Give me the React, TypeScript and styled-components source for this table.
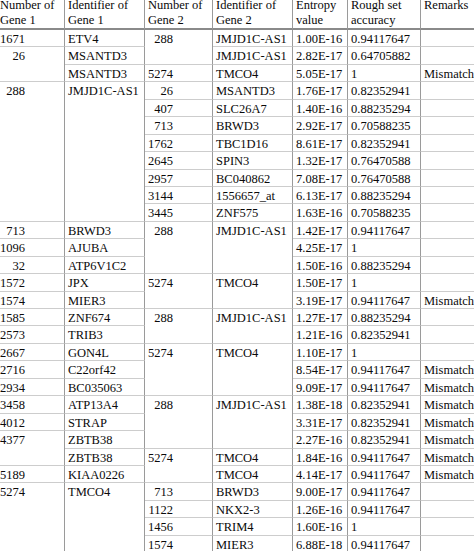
import styled, { createGlobalStyle } from "styled-components";

const GlobalStyle = createGlobalStyle`
  html, body {
    margin: 0;
    padding: 0;
    background: #fff;
    overflow: hidden;
  }
`;

type Cell = { text: string; span?: number; num?: boolean };

const n = (text: string, span = 1): Cell => ({ text, span, num: true });
const t = (text: string, span = 1): Cell => ({ text, span });

const headers = [
  ["Number of", "Gene 1"],
  ["Identifier of", "Gene 1"],
  ["Number of", "Gene 2"],
  ["Identifier of", "Gene 2"],
  ["Entropy", "value"],
  ["Rough set", "accuracy"],
  ["Remarks", ""],
];

// rows as an html table would list them: cells covered by a rowspan are left out
const rows: (Cell | string)[][] = [
  [n("1671"), "ETV4", n("288", 2), "JMJD1C-AS1", "1.00E-16", "0.94117647", ""],
  [n("26", 2), "MSANTD3", "JMJD1C-AS1", "2.82E-17", "0.64705882", ""],
  ["MSANTD3", n("5274"), "TMCO4", "5.05E-17", "1", "Mismatch"],
  [n("288", 8), t("JMJD1C-AS1", 8), n("26"), "MSANTD3", "1.76E-17", "0.82352941", ""],
  [n("407"), "SLC26A7", "1.40E-16", "0.88235294", ""],
  [n("713"), "BRWD3", "2.92E-17", "0.70588235", ""],
  [n("1762"), "TBC1D16", "8.61E-17", "0.82352941", ""],
  [n("2645"), "SPIN3", "1.32E-17", "0.76470588", ""],
  [n("2957"), "BC040862", "7.08E-17", "0.76470588", ""],
  [n("3144"), "1556657_at", "6.13E-17", "0.88235294", ""],
  [n("3445"), "ZNF575", "1.63E-16", "0.70588235", ""],
  [n("713"), "BRWD3", n("288", 3), t("JMJD1C-AS1", 3), "1.42E-17", "0.94117647", ""],
  [n("1096"), "AJUBA", "4.25E-17", "1", ""],
  [n("32"), "ATP6V1C2", "1.50E-16", "0.88235294", ""],
  [n("1572"), "JPX", n("5274", 2), t("TMCO4", 2), "1.50E-17", "1", ""],
  [n("1574"), "MIER3", "3.19E-17", "0.94117647", "Mismatch"],
  [n("1585"), "ZNF674", n("288", 2), t("JMJD1C-AS1", 2), "1.27E-17", "0.88235294", ""],
  [n("2573"), "TRIB3", "1.21E-16", "0.82352941", ""],
  [n("2667"), "GON4L", n("5274", 3), t("TMCO4", 3), "1.10E-17", "1", ""],
  [n("2716"), "C22orf42", "8.54E-17", "0.94117647", "Mismatch"],
  [n("2934"), "BC035063", "9.09E-17", "0.94117647", "Mismatch"],
  [n("3458"), "ATP13A4", n("288", 3), t("JMJD1C-AS1", 3), "1.38E-18", "0.82352941", "Mismatch"],
  [n("4012"), "STRAP", "3.31E-17", "0.82352941", "Mismatch"],
  [n("4377", 2), "ZBTB38", "2.27E-16", "0.82352941", "Mismatch"],
  ["ZBTB38", n("5274", 2), "TMCO4", "1.84E-16", "0.94117647", "Mismatch"],
  [n("5189"), "KIAA0226", "TMCO4", "4.14E-17", "0.94117647", "Mismatch"],
  [n("5274", 4), t("TMCO4", 4), n("713"), "BRWD3", "9.00E-17", "0.94117647", ""],
  [n("1122"), "NKX2-3", "1.26E-16", "0.94117647", ""],
  [n("1456"), "TRIM4", "1.60E-16", "1", ""],
  [n("1574"), "MIER3", "6.88E-18", "0.94117647", ""],
];

const Page = styled.div`
  width: 474px;
  height: 551px;
  overflow: hidden;
  font-family: "Liberation Serif", "Times New Roman", serif;
  font-size: 12.5px;
  color: #0a0a0a;
`;

const Grid = styled.div`
  display: grid;
  grid-template-columns: 68px 80px 68px 80px 55px 73px 70px;
  grid-template-rows: 34px repeat(30, 17.45px);
  margin: -4px 0 0 -3px;
  width: 494px;
`;

const Head = styled.div`
  box-sizing: border-box;
  padding: 2px 3px 0;
  line-height: 15px;
  border-right: 1px solid #9a9a9a;
  border-bottom: 2px solid #8a8a8a;
  white-space: nowrap;
`;

const Td = styled.div<{ $span: number }>`
  grid-row: span ${(p) => p.$span};
  box-sizing: border-box;
  padding: 1px 3px 0;
  line-height: 16px;
  border-right: 1px solid #9a9a9a;
  border-bottom: 1px solid #cdcdcd;
  white-space: nowrap;
`;

const Num = styled.span`
  display: inline-block;
  width: 2em;
  text-align: right;
`;

export default function App() {
  return (
    <Page>
      <GlobalStyle />
      <Grid>
        {headers.map(([a, b], i) => (
          <Head key={"h" + i}>
            {a}
            <br />
            {b}
          </Head>
        ))}
        {rows.flatMap((row, r) =>
          row.map((c, i) => {
            const cell = typeof c === "string" ? t(c) : c;
            return (
              <Td key={r + "-" + i} $span={cell.span ?? 1}>
                {cell.num ? <Num>{cell.text}</Num> : cell.text}
              </Td>
            );
          })
        )}
      </Grid>
    </Page>
  );
}
